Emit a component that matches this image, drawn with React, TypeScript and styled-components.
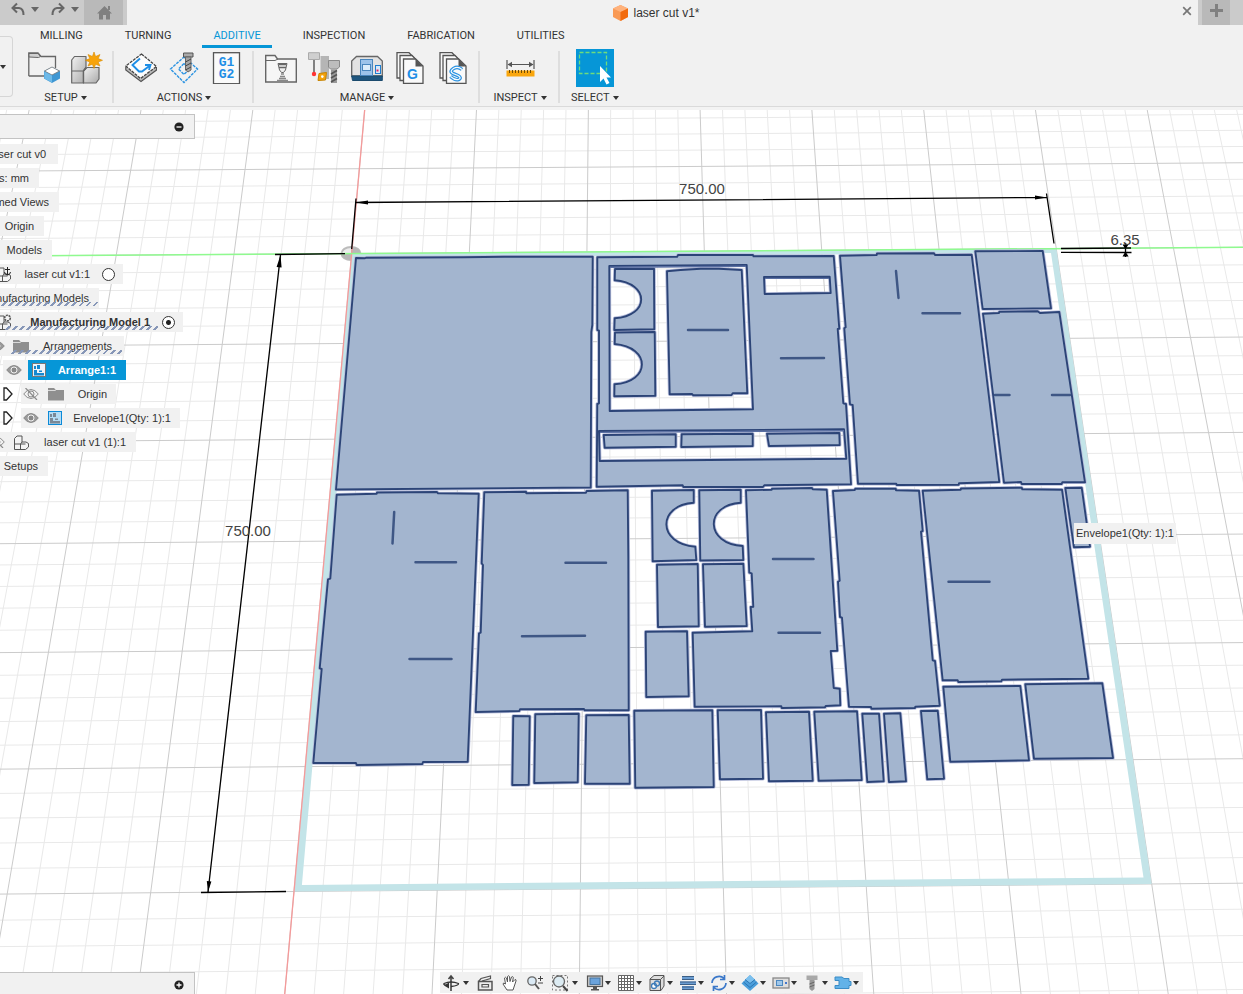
import React from "react";
import styled, { createGlobalStyle, css } from "styled-components";

const GlobalStyle = createGlobalStyle`
  * { box-sizing: border-box; }
  body { margin: 0; background: #fff; font-family: "Liberation Sans", Arial, sans-serif; font-size: 11px; color: #333; }
  button { font: inherit; color: inherit; background: none; border: 0; padding: 0; cursor: pointer; }
  svg { display: block; flex: none; }
`;

/* ---------- page frame ---------- */

const Page = styled.div`
  min-height: 100vh;
  display: grid;
  grid-template-rows: auto 1fr;
`;

const Header = styled.header`
  background: #f1f1f1;
  border-bottom: 3px solid #f3f3f3;
`;

const TitleBar = styled.div`
  display: flex;
  height: 25px;
`;

const QuickBar = styled.div`
  display: flex;
  align-items: flex-start;
  gap: 12px;
  width: 84px;
  padding: 2px 0 0 11px;
  background: #cbcbcb;
`;

const QuickItem = styled.div`
  display: flex;
  align-items: center;
  gap: 6px;
`;

const HomeButton = styled.button`
  width: 43px;
  padding: 6px 0 0 13px;
  display: flex;
  align-items: flex-start;
  background: #b9b9b9;
  border-right: 4px solid #cbcbcb;
`;

const DocumentTitle = styled.div`
  flex: 1;
  display: flex;
  align-items: center;
  justify-content: center;
  gap: 5px;
  padding-right: 12px;
  font-size: 12px;
`;

const CloseButton = styled.button`
  width: 23px;
  padding-left: 7px;
  margin-left: -23px;
  display: flex;
  align-items: center;
  padding-bottom: 3px;
`;

const NewTabButton = styled.button`
  width: 45px;
  display: flex;
  align-items: center;
  justify-content: center;
  background: #b9b9b9;
  border-left: 4px solid #cbcbcb;
  border-right: 13px solid #cbcbcb;
  padding-bottom: 4px;
`;

const RibbonShell = styled.div`
  display: flex;
  height: 82px;
  border-bottom: 1px solid #dadada;
`;

const WorkspaceButton = styled.button`
  width: 13px;
  height: 61px;
  margin-top: 11px;
  border: 1px solid #d6d6d6;
  border-left: 0;
  border-radius: 0 4px 4px 0;
  display: flex;
  align-items: center;
`;

const RibbonMain = styled.div`
  flex: 1;
  padding-left: 4px;
`;

const Tabs = styled.div`
  display: flex;
  gap: 20px;
  padding-left: 12px;
  height: 23px;
  font-family: Roboto, sans-serif;
`;

const Tab = styled.button<{ $active?: boolean }>`
  padding: 2px 11px 0;
  height: 23px;
  line-height: 18px;
  border-bottom: 3px solid transparent;
  ${(p) => p.$active && css`color: #0696d7; border-bottom-color: #0696d7;`}
`;

const Groups = styled.div`
  display: flex;
  padding-top: 3px;
`;

const Group = styled.section<{ $last?: boolean }>`
  min-width: ${(p) => (p.$last ? 0 : 80)}px;
  padding: 0 9px 0 11px;
  height: 52px;
  border-right: ${(p) => (p.$last ? 0 : 2)}px solid #dedede;
  display: flex;
  flex-direction: column;
  align-items: center;
  font-family: Roboto, sans-serif;
`;

const Tools = styled.div`
  display: flex;
  align-items: center;
  gap: 11px;
  height: 34px;
`;

const Tool = styled.button<{ $selected?: boolean }>`
  width: ${(p) => (p.$selected ? 38 : 32)}px;
  height: ${(p) => (p.$selected ? 38 : 34)}px;
  display: flex;
  align-items: center;
  justify-content: center;
  ${(p) => p.$selected && css`background: #0696d7;`}
`;

const GroupButton = styled.button`
  display: flex;
  align-items: center;
  gap: 3px;
  line-height: 14px;
  margin-top: 6px;
  white-space: nowrap;
`;

const Caret = styled.span<{ $large?: boolean }>`
  border: ${(p) => (p.$large ? 4 : 3)}px solid transparent;
  border-top: ${(p) => (p.$large ? 5 : 4)}px solid ${(p) => (p.$large ? "#666" : "#333")};
  border-bottom: 0;
`;

/* ---------- canvas and overlays ---------- */

const Canvas = styled.main`
  position: relative;
  overflow: hidden;
  min-height: 884px;
  background: #fff;
`;

const Scene = styled.svg`
  position: absolute;
  inset: 0;
  width: 100%;
  height: 100%;
`;

const Browser = styled.aside`
  position: absolute;
  top: 4px;
  left: 0;
  width: 195px;
`;

const PanelHead = styled.div`
  height: 25px;
  display: flex;
  align-items: center;
  justify-content: flex-end;
  padding-right: 10px;
  background: #f1f1f1;
  border: 1px solid #c3c3c3;
  border-left: 0;
`;

const Comments = styled(PanelHead)`
  position: absolute;
  left: 0;
  bottom: 0;
  width: 195px;
  height: 22px;
  padding-top: 2px;
  border-bottom: 0;
`;

const Tree = styled.ul`
  list-style: none;
  margin: 5px 0 0;
  padding: 0;
  display: flex;
  flex-direction: column;
  gap: 4px;
`;

const Row = styled.li`
  display: flex;
  height: 20px;
`;

const RowBody = styled.div<{ $w: number; $end?: number }>`
  position: relative;
  width: ${(p) => p.$w}px;
  padding-right: ${(p) => p.$end || 10}px;
  display: flex;
  align-items: center;
  justify-content: flex-end;
  overflow: hidden;
  background: #f1f1f1;
  white-space: nowrap;
`;

const SelectedBody = styled(RowBody)`
  background: #0696d7;
  color: #fff;
  font-weight: bold;
`;

const EyeCell = styled.div`
  width: 25px;
  margin-left: 3px;
  padding-right: 3px;
  display: flex;
  align-items: center;
  justify-content: center;
  background: #f1f1f1;
`;

const Expander = styled.button`
  width: 18px;
  padding-left: 3px;
  margin-right: 3px;
`;

const RowLabel = styled.label<{ $gap?: number; $bold?: boolean }>`
  margin-left: ${(p) => p.$gap || 0}px;
  font-weight: ${(p) => (p.$bold ? "bold" : "inherit")};
`;

const Hatch = styled.i<{ $from?: number; $to: number }>`
  position: absolute;
  left: ${(p) => p.$from || 0}px;
  width: ${(p) => p.$to - (p.$from || 0)}px;
  bottom: 2px;
  height: 4px;
  background: repeating-linear-gradient(135deg, transparent 0 3px, #8797b8 3px 5px);
`;

const Radio = styled.input`
  appearance: none;
  flex: none;
  width: 13px;
  height: 13px;
  margin: 0 0 0 12px;
  border: 1px solid #333;
  border-radius: 50%;
  background: #fff;
  &:checked { background: radial-gradient(circle, #222 0 2px, #fff 3px); }
`;

const Tooltip = styled.div`
  position: absolute;
  left: 1074px;
  top: 413px;
  height: 21px;
  line-height: 21px;
  padding: 0 2px;
  background: #f1f1f1;
  white-space: nowrap;
`;

const NavBar = styled.nav`
  position: absolute;
  left: 440px;
  bottom: 1px;
  height: 21px;
  padding: 0 4px 0 2px;
  display: flex;
  gap: 8px;
  background: #f1f1f1;
`;

const NavGroup = styled.div<{ $gap: number }>`
  display: flex;
  gap: ${(p) => p.$gap}px;
`;

const NavButton = styled.button<{ $gap: number }>`
  display: flex;
  align-items: center;
  gap: ${(p) => p.$gap}px;
`;

/* ---------- scene data ---------- */

type Pt = [number, number];

/* Corners of the 750 mm square on screen: top-left, top-right, bottom-right, bottom-left. */
const CORNERS: Pt[] = [[351.7, 253.5], [1056.3, 248.6], [1151.7, 884], [294, 891.5]];

const makeProjection = ([p0, p1, p2, p3]: Pt[]) => {
  const dx1 = p1[0] - p2[0], dx2 = p3[0] - p2[0], sx = p0[0] - p1[0] + p2[0] - p3[0];
  const dy1 = p1[1] - p2[1], dy2 = p3[1] - p2[1], sy = p0[1] - p1[1] + p2[1] - p3[1];
  const det = dx1 * dy2 - dx2 * dy1;
  const g = (sx * dy2 - dx2 * sy) / det;
  const h = (dx1 * sy - sx * dy1) / det;
  const a = p1[0] - p0[0] + g * p1[0], b = p3[0] - p0[0] + h * p3[0];
  const d = p1[1] - p0[1] + g * p1[1], e = p3[1] - p0[1] + h * p3[1];
  return (u: number, v: number): Pt => {
    const w = g * u + h * v + 1;
    return [(a * u + b * v + p0[0]) / w, (d * u + e * v + p0[1]) / w];
  };
};

const project = makeProjection(CORNERS);
const at = (u: number, v: number) => project(u / 30, v / 30).map((n) => n.toFixed(1)).join(" ");

const range = (from: number, to: number) => Array.from({ length: to - from + 1 }, (_, i) => from + i);

const gridPath = (major: boolean) =>
  [
    ...range(-40, 60).filter((n) => (n % 5 === 0) === major).map((n) => `M${at(n, -10)}L${at(n, 42)}`),
    ...range(-10, 40).filter((n) => (n % 5 === 0) === major).map((n) => `M${at(-40, n)}L${at(60, n)}`),
  ].join("");

const rim = 0.254;
const ring = `M${at(0, 0)}L${at(30, 0)}L${at(30, 30)}L${at(0, 30)}ZM${at(rim, rim)}L${at(30 - rim, rim)}L${at(30 - rim, 30 - rim)}L${at(rim, 30 - rim)}Z`;

const PARTS: string[] = [
  "M356 258L365 258.3L366 257.7L464 257.3L504 256.7L592.7 256.7L592.3 325L591.3 332L590.7 487.5L336 489.5Z",
  "M597.3 257.3L677.3 256.7L678 255L753 255L753.5 256.3L833.7 256L839.3 328.7L837.7 329L843.3 403.3L846 404L851 484.3L764.3 485.3L763 487L683.3 487L682.7 485.3L596.7 486.7L597.3 404L599 403.3L599 330.7L597.3 330Z" +
    "M609.3 266L746.7 265L753 409.3L609.7 411ZM764 277L829.7 276.7L830.7 293L764.7 294ZM599 431L844 429.3L846.3 458.7L599.7 461Z",
  "M615 269L654 268.7L654.3 329.3L614.3 330L614.7 318.3C650 316 650 283 614.7 280.3Z",
  "M615 332.5L654.7 332L655.3 395.7L614.3 396.3L614.5 384.3C651 382 651 347 614.7 344Z",
  "M667 271.3L680.5 270L700.7 268.7L719 268.7L741.7 270L747.3 393.3L732.7 393.3L731.5 395L693.3 395.3L692 394L669.7 394.3Z",
  "M603.7 435L675.7 434.3L675.7 446.7L604.7 447.7Z",
  "M681.7 434.3L752.7 433.7L752.7 446L681.3 447Z",
  "M767 433.7L839.3 433L839.7 445L769 446Z",
  "M840 255.7L876.7 255L877 253.5L934 253.3L935 255L971.7 254.7L999.3 482L959 483.3L958.7 484.7L896.7 485L896.3 483.7L858 483.7L852.7 405L850 404.3L844.3 328.3L845.7 327.3Z",
  "M975.3 251.3L1042.7 251L1051 308.3L982.7 309Z",
  "M983 313.7L999 313L999.3 311.7L1037.7 311.3L1040 313L1059.3 312L1085 482.3L1062.3 482.3L1061.7 484L1021.7 484L1021 482L1004 482.7Z",
  "M336.7 494.7L376.7 493.7L377 492.5L437 492L438 493.3L478.7 493.7L467.7 761.7L423 762L422.3 764L356.7 765L356 763L313.3 763L321.7 669L319.7 668.3L328 579.3L330.3 578.7Z",
  "M484.3 492.3L526 491.7L526.3 493.3L586 492.7L586.7 491L627.7 490.3L628.3 556.7L628.7 710.3L584.7 710.3L584 709L520 709.3L519.3 711L475.7 712L479 633.3L480.7 632.7L483 565L481.7 563.3Z",
  "M513.3 716L529.7 716.3L528.7 784.7L512.3 785Z",
  "M535.3 714.3L578.7 713.7L577.7 782.3L534.3 783Z",
  "M586.3 715.3L628.7 715L629.7 783.7L585 783.7Z",
  "M634.3 710.7L712.3 710.3L713.7 787L635.3 787.7Z",
  "M717.7 710.3L761 710L763 778.7L720 779.3Z",
  "M766 712.3L809 711.7L812.7 780.7L769 781.3Z",
  "M814.3 711.7L857 711.3L861.7 780L818.7 780.7Z",
  "M652 490.7L693.7 490L693.7 502.7C657 505 657 544 695.3 546.7L696.3 560L652.7 561.3Z",
  "M699.3 490.3L740.7 489.7L740.7 502.7C704 505 705 544 742.7 546L743.3 560L700.3 560.5Z",
  "M657 564.7L697.7 564L698.7 626.3L658 627Z",
  "M703 564.3L743.3 563.7L746.7 626L705 626.7Z",
  "M645.7 631.7L687 631.3L688.7 696.3L646.3 697Z",
  "M746 490.3L771.7 489.7L772 488.7L812 488L812.7 489.3L826.7 489.7L837.3 650.7L830.7 651L833.7 688L839.7 688.7L840.3 705.3L825.7 706L825 707.3L781.7 708L781.3 706.3L694.7 706.7L692.7 632.7L752.3 631.3L750.7 607L753.3 606.7L751.7 573.3L749.3 572.7Z",
  "M833 491L854.7 490L855.3 488.7L895.7 488.7L896 490.3L919 490.7L922.7 531L921 531.7L932.7 660.3L935 661L939.7 705.7L915.3 706.7L915 708L871.3 708.7L871 707L849 706.7L842 617.7L840 617L838 581.7L839.7 580.7Z",
  "M922.7 490.7L960.7 489.7L961 488.5L1021.7 487.7L1022.3 489.3L1062 489.7L1088.3 678.7L1002 679.7L1001.3 681.3L958.3 682L957.7 680.3L942.7 680.3Z",
  "M1065.3 488L1081.7 487.7L1090 546.7L1074 547.3Z",
  "M943.3 686.7L1020.3 686L1029 760.3L950.3 761.7Z",
  "M1025.3 684.3L1102.3 683.3L1113 758L1034 758.7Z",
  "M862.3 713.7L879 713.7L883.7 781.3L867.3 782Z",
  "M884 713.7L900.3 713.3L906 781.3L889 782Z",
  "M921 711L937.7 710.7L944 778.7L927.3 779.3Z",
];

const SLOTS =
  "M688 330H728M781 358.3L824 358M922.5 313.3H960M995 395H1009.500M1052 395H1070M415.500 562.2H456M409.500 659H451.500M565.500 562.7H606M522 636.3L585 635.7M773 559H813.500M778.500 632.700H820M948.500 581.800H989.500M896 271L898.500 298M394.200 512L392.500 543.500";

const Viewport = () => (
  <Scene viewBox="0 110 1243 884" preserveAspectRatio="xMinYMin slice" role="img" aria-label="Arranged sheet parts">
    <path d={gridPath(false)} stroke="#e9e9e9" fill="none" />
    <path d={gridPath(true)} stroke="#cbcbcb" fill="none" />
    <ellipse cx="351" cy="253.5" rx="9.5" ry="6.5" fill="#ececec" stroke="#bcbcbc" strokeWidth="2" />
    <path d="M351 253.5V247A9.5 6.5 0 0 1 360.5 253.5ZM351 253.5V260A9.5 6.5 0 0 1 341.5 253.5Z" fill="#b8b8b8" />
    <path d={ring} fill="#c3e4e8" fillRule="evenodd" />
    <path d={`M${at(0, -10)}L${at(0, 42)}`} stroke="#f59a9a" strokeWidth="1.3" />
    <path d={`M${at(-40, 0)}L${at(60, 0)}`} stroke="#8ffa8f" strokeWidth="1.5" />
    <g strokeLinejoin="round" fillRule="evenodd">
      {PARTS.map((d) => <path key={d} d={d} fill="none" stroke="#b9bfdc" strokeWidth="3.6" />)}
      {PARTS.map((d) => <path key={d} d={d} fill="#a3b5cf" stroke="#2c4477" strokeWidth="1.9" />)}
    </g>
    <path d={SLOTS} stroke="#3f5785" strokeWidth="2.5" strokeLinecap="round" />
    <path d="M600 432.4L844 430.8M610 267.2L746 266.2M765 278.4H829" stroke="#5b70a3" strokeWidth="1.4" />
    <g stroke="#000" strokeWidth="1.3" fill="none">
      <path d="M356 202.5L1047 197.5M356 198.5L351.7 249M1046.5 193.5L1054 243.5" />
      <path d="M280.5 254.5L208 892M275 254.5L345 253.7M201 892.5L286 891.5" />
      <path d="M1061 248.5L1131 248M1061 252.3L1131.5 252.5M1125.5 243V257" />
    </g>
    <path d="M356 202.5L368 200.4V204.4ZM1047 197.5L1035 195.6V199.6ZM280.500 255L276.600 267L281.600 267.500ZM208 892L206.800 881L211.400 881.500ZM1125.500 249L1122.500 244.500H1128.500ZM1125.500 251.500L1122.500 256.500H1128.500Z" fill="#000" />
    <g fontFamily="Liberation Sans, Arial, sans-serif" fontSize="15" fill="#444" textAnchor="middle">
      <text x="702" y="194">750.00</text>
      <text x="248" y="536">750.00</text>
      <text x="1125" y="245">6.35</text>
    </g>
  </Scene>
);

/* ---------- icons ---------- */

const UndoIcon = ({ flip }: { flip?: boolean }) => (
  <svg width="14" height="14" viewBox="0 0 14 14" fill="none" stroke="#666" strokeWidth="2">
    <path d="M6 1.5L1.5 6L6 10.5M2 6H8Q12.5 6.5 12.5 13" transform={flip ? "translate(14 0) scale(-1 1)" : undefined} />
  </svg>
);

const HomeIcon = () => (
  <svg width="15" height="14" viewBox="0 0 15 14" fill="#808080">
    <path d="M7.5 0L15 7.5H13V13.5H9V9H6V13.5H2V7.5H0ZM11 0H13V4H11Z" />
  </svg>
);

const CubeIcon = () => (
  <svg width="15" height="16" viewBox="0 0 15 16">
    <path d="M7.5 0L15 3.5V12L7.5 16L0 12V3.5Z" fill="#f99a55" />
    <path d="M7.5 0L15 3.5L7.5 7L0 3.5Z" fill="#ffb27c" />
    <path d="M7.5 7L15 3.5V12L7.5 16Z" fill="#f26a0c" />
  </svg>
);

const SetupFolderIcon = () => (
  <svg width="32" height="32" viewBox="0 0 32 32">
    <path d="M.8 24V1H10L13 4.5H27.5V16M.8 24H16" fill="none" stroke="#666" strokeWidth="1.3" />
    <path d="M1 5V1.5H10L12.5 4.5L10.5 5.5Z" fill="#d0d0d0" stroke="#666" />
    <path d="M24 15L32 19V26.5L24 31L16 26.5V19Z" fill="#3f97d3" />
    <path d="M24 15L31.5 19L24 23L16.5 19Z" fill="#fff" stroke="#777" strokeWidth=".8" />
    <path d="M16.3 19.5L24 23.5V30.5L16.3 26.5Z" fill="#6db9e8" />
  </svg>
);

const NewModelIcon = () => (
  <svg width="32" height="32" viewBox="0 0 32 32">
    <defs>
      <linearGradient id="metal" x1="0" y1="0" x2="1" y2="1">
        <stop offset="0" stopColor="#f2f2f2" /><stop offset="1" stopColor="#a9a9a9" />
      </linearGradient>
    </defs>
    <g fill="url(#metal)" stroke="#666" strokeWidth="1.2" strokeLinejoin="round">
      <path d="M.7 8L3.5 4.5H15V15L12.5 18.5V31H.7Z" />
      <path d="M12.5 19L16 15.5H28V27L25 31H12.5Z" />
      <path d="M.7 19H12.5M12.5 19V31M12.5 19L15 16" fill="none" />
    </g>
    <path d="M23 0L24.6 4.5L29 2.5L27.2 6.6L31.5 8.3L27.2 10L29 14L24.6 12.2L23 16.5L21.4 12.2L17 14L18.8 10L14.5 8.3L18.8 6.6L17 2.5L21.4 4.5Z" fill="#f7a30a" stroke="#d98b00" strokeWidth=".6" />
  </svg>
);

const PocketIcon = () => (
  <svg width="32" height="32" viewBox="0 0 32 32">
    <path d="M.8 15V18L16 29.5L31.5 18V15" fill="#bbb" stroke="#555" strokeWidth="1.2" />
    <path d="M16.5 2L31.5 14.500L15.5 26.5L.8 14Z" fill="#fdfdfd" stroke="#444" strokeWidth="1.3" strokeDasharray="3 1" />
    <path d="M15 6.500L7.500 13L14 19.500H17L25 13.500M20 13H25.500L24 18" fill="none" stroke="#1e8ee6" strokeWidth="1.900" />
  </svg>
);

const ToolpathIcon = () => (
  <svg width="32" height="32" viewBox="0 0 32 32">
    <path d="M16 5L29.5 17L16 30.5L2.5 17ZM16 11.5L21.5 17L16 22.5L10.5 17Z" fill="none" stroke="#2b93e2" strokeWidth="1.4" strokeDasharray="3 1" />
    <path d="M15.5 1H25V5H15.5Z" fill="#aaa" stroke="#555" />
    <path d="M17.5 5H23V18L20 20L17.5 18Z" fill="#a5a5a5" stroke="#666" />
    <path d="M17.5 10L23 7M17.5 14L23 11M17.5 18L23 15" stroke="#444" />
  </svg>
);

const GcodeIcon = () => (
  <svg width="32" height="32" viewBox="0 0 32 32">
    <rect x="2.5" y=".7" width="26" height="31" fill="#fafafa" stroke="#555" strokeWidth="1.3" />
    <g fontFamily="Liberation Mono, monospace" fontWeight="bold" fontSize="13" fill="#1e8ee6" textAnchor="middle">
      <text x="15.5" y="14">G1</text><text x="15.5" y="26">G2</text>
    </g>
  </svg>
);

const TemplateIcon = () => (
  <svg width="32" height="32" viewBox="0 0 32 32" stroke="#666">
    <path d="M.7 30V3.5H10L12.5 7H31.3V30Z" fill="#f6f6f6" strokeWidth="1.4" />
    <path d="M.7 8.5H10L13 7" fill="none" />
    <path d="M13 11.5H22L20.5 18L18.5 20.5H16.5L14.5 18Z" fill="#eee" />
    <path d="M13.5 12.5H21.5M14 15.5H21" strokeWidth="1.6" />
    <path d="M16 22H19M15 24.5H20M14 26.500H21M12 28.5H23" stroke="#888" strokeWidth="1.5" />
  </svg>
);

const ToolLibraryIcon = () => (
  <svg width="32" height="32" viewBox="0 0 32 32">
    <path d="M12.5 4H21V27H12.5Z" fill="#b5b5b5" />
    <path d="M.5 .7H11.5V7.5H.5Z" fill="#cfcfcf" stroke="#aaa" />
    <path d="M6 8V21" stroke="#666" strokeWidth="1.6" />
    <circle cx="6" cy="22" r="2.2" fill="#f33" />
    <path d="M11 21.5L18.5 20.5L17.5 28L10 28.5Z" fill="#f5a30c" stroke="#c78300" />
    <circle cx="14.3" cy="24.6" r="1.3" fill="#fff" />
    <path d="M20.5 8.5H31.5V15L29 17H22.500L20.5 15Z" fill="#bdbdbd" stroke="#8a8a8a" />
    <path d="M23 17.5H29V31H23Z" fill="#999" />
    <path d="M23 22L29 18.5M23 26L29 22.5M23 30L29 26.5" stroke="#555" strokeWidth="1.6" />
  </svg>
);

const MachineIcon = () => (
  <svg width="32" height="32" viewBox="0 0 32 32">
    <path d="M.7 24V9L5.5 4.5H26.5L31.3 9V24Z" fill="#e3e3e3" stroke="#666" strokeWidth="1.3" />
    <path d="M.7 24H31.3V28.5H1.500Z" fill="#1f567f" stroke="#1b4a6d" />
    <rect x="9.5" y="7.5" width="12" height="16" fill="#9dc3ea" stroke="#4a86bd" />
    <rect x="11.5" y="12.5" width="8" height="6" fill="#dcecfa" stroke="#4a86bd" />
    <rect x="24.5" y="13.5" width="5" height="8" fill="#d8e9f9" stroke="#1e7ed0" />
    <path d="M25.5 17.500H27.5V19.5H25.5Z" fill="#e0245e" />
  </svg>
);

const PagesIcon = ({ children }: { children: React.ReactNode }) => (
  <svg width="32" height="32" viewBox="0 0 32 32">
    <g fill="#fafafa" stroke="#555" strokeWidth="1.3">
      <path d="M3 .7H15L22 8V26H3Z" /><path d="M6 3.5H18L25 10.5V28.5H6Z" />
      <path d="M9.5 7H21.5L29 14V31.3H9.5Z" />
    </g>
    <path d="M21.5 7L29 14.5H21.5Z" fill="#555" />
    {children}
  </svg>
);

const RulerIcon = () => (
  <svg width="32" height="32" viewBox="0 0 32 32">
    <path d="M3 8V17M30 8V17M4 12.5H29" stroke="#555" strokeWidth="1.2" />
    <path d="M3.5 12.5L8 9.8V15.2ZM29.500 12.5L25 9.8V15.2Z" fill="#555" />
    <rect x="2.5" y="18.5" width="28" height="6" fill="#f9a60d" />
    <path d="M5.5 18V21M8.5 18V21M11.5 18V21M14.5 18V21M17.5 18V21M20.5 18V21M23.5 18V21M26.5 18V21" stroke="#6d4a05" />
  </svg>
);

const SelectIcon = () => (
  <svg width="38" height="38" viewBox="0 0 38 38">
    <rect x="3.5" y="3.5" width="27" height="21" fill="none" stroke="#6fdc7c" strokeWidth="1.3" strokeDasharray="4 2" />
    <path d="M24 17V33L27.5 29.5L30.5 35.5L33.5 34L30.5 28.5H35Z" fill="#fff" />
  </svg>
);

const SignIcon = ({ plus }: { plus?: boolean }) => (
  <svg width="10" height="10" viewBox="0 0 10 10">
    <circle cx="5" cy="5" r="4.6" fill="#222" />
    <path d={plus ? "M2.5 5H7.5M5 2.5V7.5" : "M2.5 5H7.5"} stroke="#fff" strokeWidth="1.3" />
  </svg>
);

const EyeIcon = ({ off }: { off?: boolean }) => (
  <svg width="16" height="12" viewBox="0 0 16 12" fill="none" stroke="#8b8b8b">
    <path d="M.7 6Q4 1.5 8 1.5T15.3 6Q12 10.5 8 10.5T.7 6Z" fill={off ? "none" : "#9a9a9a"} />
    <circle cx="8" cy="6" r="3" fill={off ? "none" : "#888"} stroke={off ? "#8b8b8b" : "#f1f1f1"} />
    {off && <path d="M2.5 0L14 12" strokeWidth="1.2" />}
  </svg>
);

const FolderIcon = () => (
  <svg width="16" height="14" viewBox="0 0 16 14" fill="#8f8f8f">
    <path d="M0 1H6L8 3H16V13.5H0Z" />
    <path d="M0 3.5H7L8.5 2.5" stroke="#eee" strokeWidth=".8" fill="none" />
  </svg>
);

const ArrangeIcon = ({ tint }: { tint?: boolean }) => (
  <svg width="14" height="14" viewBox="0 0 14 14">
    <rect x=".5" y=".5" width="13" height="13" fill={tint ? "#b5dcf5" : "#eef4f9"} stroke={tint ? "#0b8ad8" : "#777"} />
    <path d="M2 3H4V6H2ZM5 2H8V6H5ZM2 7H5V10H12V12.5H2ZM7 7.5H10V9H7Z" fill={tint ? "#7a8896" : "#1488d0"} />
  </svg>
);

const BodiesIcon = ({ badge }: { badge?: "anchor" | "gear" }) => (
  <svg width="17" height="17" viewBox="0 0 17 17" fill="#f4f4f4" stroke="#555" strokeLinejoin="round">
    <path d="M1.5 4.5L4 2H9V8H13L15.5 9.5V13L12.5 15.5H1.5Z" />
    <path d="M1.5 10H7.5V15.5M7.5 10L9 8M7.5 10H12.5" fill="none" />
    {badge === "anchor" && <path d="M12.5 1V9M10 3.5H15M9.5 6Q10 9 12.5 9T15.5 6" fill="none" stroke="#222" />}
    {badge === "gear" && <circle cx="12.5" cy="4" r="2.8" strokeWidth="1.6" strokeDasharray="2 .8" />}
  </svg>
);

const NAV_A: [string, React.ReactNode, boolean][] = [
  ["Orbit", <><path d="M9 2V17M6.5 5L9 2L11.5 5" fill="none" stroke="#444" strokeWidth="1.6" /><path d="M6 11.5Q1 11 2 9.500Q9 6.500 16.500 9.500Q17 11.500 9 12.500" fill="none" stroke="#333" strokeWidth="1.3" /><path d="M7 8.500V14.500L2 11.500Z" fill="#333" /></>, true],
  ["Look at", <><path d="M2.5 7.500H16V16H2.5Z" fill="#eee" stroke="#555" strokeWidth="1.5" /><path d="M2.500 7.500L5 4.500L14.500 2V4.500L6 7M6 10.500H12.500V13H6Z" fill="none" stroke="#555" strokeWidth="1.2" /></>, false],
  ["Pan", <path d="M6 16L2 10Q2 8 4.5 10L3.5 4Q4.5 2.5 5.5 4L6.5 8L6.5 2.5Q7.5 1 8.5 2.5L9 7.5L10.5 3Q12 2 12.3 3.5L11.5 8L14 5.5Q15.5 5.5 15 7L12 16Z" fill="#fff" stroke="#555" />, false],
  ["Zoom", <><circle cx="6" cy="7" r="4.2" fill="#dbeaf5" stroke="#666" strokeWidth="1.3" /><path d="M9 10L13 15" stroke="#555" strokeWidth="2" /><path d="M12 4.5H17M14.5 2V7M12 9H17" stroke="#444" /></>, false],
  ["Fit", <><path d="M1.5 1.5H16.5V16H1.5Z" fill="none" stroke="#777" strokeDasharray="2 2" /><circle cx="8" cy="7.5" r="5.5" fill="#dcebf2" stroke="#666" strokeWidth="1.3" /><path d="M12 12L16.5 17" stroke="#444" strokeWidth="2" /></>, true],
];

const NAV_B: [string, React.ReactNode][] = [
  ["Display settings", <><rect x="1.5" y="2" width="15" height="10.5" fill="#ccc" stroke="#555" strokeWidth="1.2" /><rect x="4" y="4" width="10" height="6.5" fill="#6ba3dc" stroke="#47749f" /><path d="M7 13H11V15H13V16.5H5V15H7Z" fill="#555" /></>],
  ["Grid and snaps", <path d="M1.5 1.5H16.5V16.5H1.5ZM1.5 4.5H16.5M1.5 7.5H16.5M1.5 10.5H16.5M1.5 13.5H16.5M4.5 1.5V16.5M7.5 1.5V16.5M10.5 1.5V16.5M13.5 1.5V16.5" fill="#fff" stroke="#666" />],
  ["Viewports", <><path d="M2 5L6 1.5H16V12L13 16.5H2Z" fill="#ddd" stroke="#555" /><path d="M2 5.5H12.5V16.5M12.5 5.5L16 2" fill="none" stroke="#555" /><circle cx="6" cy="12" r="2.5" fill="#fff" stroke="#3d7bb8" strokeWidth="1.3" /><circle cx="9" cy="9.5" r="2.5" fill="none" stroke="#3d7bb8" strokeWidth="1.3" /></>],
  ["Steps", <><path d="M3 3H15V6H3ZM1 7.5H17V10H1ZM3 12H15V15H3Z" fill="#6a9dd2" /><path d="M3 2.5H15M3 5.5H15M1 8H17M1 10.5H17M3 13H15M3 15.5H15" stroke="#3c5f86" /></>],
  ["Refresh", <path d="M2 9A7 7 0 0 1 14 4.5M14.5 1V5.5H10M16 9A7 7 0 0 1 4 13.5M3.5 17V12.5H8" fill="none" stroke="#3b78c9" strokeWidth="1.7" />],
  ["Stack", <><path d="M9 1L17.5 9.5L9 17L.5 9.5Z" fill="#4a9edb" /><path d="M9 1L14 5.5L9 9.5L4 5.5Z" fill="#7cc0ee" /><path d="M4 5.5L9 9.5L14 5.5M2.5 8L9 13.5L15.5 8" fill="none" stroke="#2b76b4" /></>],
  ["Machine", <><rect x="1" y="4" width="16" height="10" fill="#ddd" stroke="#888" strokeWidth="1.3" /><rect x="4.5" y="6.5" width="6" height="5" fill="#9fc7ea" stroke="#4c88c0" /><path d="M13 8H15V10H13Z" fill="#47c" /></>],
  ["Tool", <><path d="M3.5 1.5H14.5V6H3.5Z" fill="#a8a8a8" /><path d="M6.5 6H11.5V15L9 17L6.500 15Z" fill="#999" /><path d="M6.5 10L11.5 8M6.5 13L11.5 11" stroke="#666" /></>],
  ["Fixture", <path d="M1 3H8L10 4.500H15V7.500H17V11.500H15V14.500H1V11.500H5V6.500H1Z" fill="#62b2e8" stroke="#3b8cc6" />],
];

const NavIcon = ({ children }: { children: React.ReactNode }) => (
  <svg width="18" height="18" viewBox="0 0 18 18">{children}</svg>
);

/* ---------- ribbon data ---------- */

const TABS = ["MILLING", "TURNING", "ADDITIVE", "INSPECTION", "FABRICATION", "UTILITIES"];

const ribbonCurve = "M25 17.5Q21 14 16.500 16.500Q12 19.500 16 21.500L21 23.500Q25 26 21.500 27.500Q18 28.500 13.500 24.500";

const GROUPS: { name: string; tools: [string, React.ReactNode][] }[] = [
  { name: "SETUP", tools: [["New setup", <SetupFolderIcon />], ["New manufacturing model", <NewModelIcon />]] },
  { name: "ACTIONS", tools: [["Simulate", <PocketIcon />], ["Generate", <ToolpathIcon />], ["Post process", <GcodeIcon />]] },
  {
    name: "MANAGE",
    tools: [
      ["Template library", <TemplateIcon />],
      ["Tool library", <ToolLibraryIcon />],
      ["Machine library", <MachineIcon />],
      ["Post library", <PagesIcon><text x="18.5" y="27" fontFamily="Liberation Sans, sans-serif" fontWeight="bold" fontSize="14" fill="#1e8ee6" textAnchor="middle">G</text></PagesIcon>],
      ["Print settings", <PagesIcon><path d={ribbonCurve} fill="none" stroke="#2b93e2" strokeWidth="3.6" /><path d={ribbonCurve} fill="none" stroke="#fafafa" strokeWidth="1.2" /></PagesIcon>],
    ],
  },
  { name: "INSPECT", tools: [["Measure", <RulerIcon />]] },
  { name: "SELECT", tools: [["Select", <SelectIcon />]] },
];

export default function App() {
  return (
    <Page>
      <GlobalStyle />
      <Header>
        <TitleBar>
          <QuickBar>
            <QuickItem><button aria-label="Undo"><UndoIcon /></button><Caret $large /></QuickItem>
            <QuickItem><button aria-label="Redo"><UndoIcon flip /></button><Caret $large /></QuickItem>
          </QuickBar>
          <HomeButton aria-label="Home"><HomeIcon /></HomeButton>
          <DocumentTitle><CubeIcon />laser cut v1*</DocumentTitle>
          <CloseButton aria-label="Close document">
            <svg width="10" height="10" viewBox="0 0 10 10"><path d="M1.2 1.2L8.8 8.8M8.8 1.2L1.2 8.8" stroke="#777" strokeWidth="1.7" /></svg>
          </CloseButton>
          <NewTabButton aria-label="New document">
            <svg width="13" height="13" viewBox="0 0 13 13"><path d="M0 6.5H13M6.5 0V13" stroke="#808080" strokeWidth="3" /></svg>
          </NewTabButton>
        </TitleBar>
        <RibbonShell>
          <WorkspaceButton aria-label="Change workspace"><Caret /></WorkspaceButton>
          <RibbonMain>
            <Tabs>
              {TABS.map((t) => <Tab key={t} $active={t === "ADDITIVE"}>{t}</Tab>)}
            </Tabs>
            <Groups>
              {GROUPS.map((g) => (
                <Group key={g.name} $last={g.name === "SELECT"}>
                  <Tools>
                    {g.tools.map(([label, icon]) => (
                      <Tool key={label} aria-label={label} $selected={g.name === "SELECT"}>{icon}</Tool>
                    ))}
                  </Tools>
                  <GroupButton>{g.name}<Caret /></GroupButton>
                </Group>
              ))}
            </Groups>
          </RibbonMain>
        </RibbonShell>
      </Header>

      <Canvas>
        <Viewport />
        <Browser>
          <PanelHead><button aria-label="Collapse"><SignIcon /></button></PanelHead>
          <Tree>
            <Row><RowBody $w={58} $end={12}><span>laser cut v0</span></RowBody></Row>
            <Row><RowBody $w={39}><span>Units: mm</span></RowBody></Row>
            <Row><RowBody $w={59}><span>Named Views</span></RowBody></Row>
            <Row><RowBody $w={44}><span>Origin</span></RowBody></Row>
            <Row><RowBody $w={52}><span>Models</span></RowBody></Row>
            <Row>
              <RowBody $w={123} $end={8}>
                <BodiesIcon badge="anchor" />
                <RowLabel $gap={13} htmlFor="model-a">laser cut v1:1</RowLabel>
                <Radio type="radio" name="model" id="model-a" />
              </RowBody>
            </Row>
            <Row><RowBody $w={99}><span>Manufacturing Models</span><Hatch $to={98} /></RowBody></Row>
            <Row>
              <RowBody $w={183} $end={8}>
                <BodiesIcon badge="gear" />
                <RowLabel $gap={18} $bold htmlFor="model-b">Manufacturing Model 1</RowLabel>
                <Radio type="radio" name="model" id="model-b" defaultChecked />
                <Hatch $from={4} $to={158} />
              </RowBody>
            </Row>
            <Row>
              <RowBody $w={124} $end={12}>
                <EyeIcon />
                <RowLabel as="span" $gap={8}><FolderIcon /></RowLabel>
                <RowLabel as="span" $gap={14}>Arrangements</RowLabel>
                <Hatch $from={10} $to={122} />
              </RowBody>
            </Row>
            <Row>
              <EyeCell><EyeIcon /></EyeCell>
              <SelectedBody $w={98}><ArrangeIcon /><RowLabel as="span" $gap={12}>Arrange1:1</RowLabel></SelectedBody>
            </Row>
            {["Origin", "Envelope1(Qty: 1):1"].map((name, i) => (
              <Row key={name}>
                <Expander aria-label={`Expand ${name}`}>
                  <svg width="10" height="14" viewBox="0 0 10 14"><path d="M1 1H3.5L9 7L3.5 13H1Z" fill="#fff" stroke="#222" strokeWidth="1.3" /></svg>
                </Expander>
                <RowBody $w={i ? 159 : 95} $end={9}>
                  <EyeIcon off={!i} />
                  <RowLabel as="span" $gap={9}>{i ? <ArrangeIcon tint /> : <FolderIcon />}</RowLabel>
                  <RowLabel as="span" $gap={i ? 11 : 14}>{name}</RowLabel>
                </RowBody>
              </Row>
            ))}
            <Row>
              <RowBody $w={136}>
                <EyeIcon off />
                <RowLabel as="span" $gap={8}><BodiesIcon /></RowLabel>
                <RowLabel as="span" $gap={14}>laser cut v1 (1):1</RowLabel>
              </RowBody>
            </Row>
            <Row><RowBody $w={48}><span>Setups</span></RowBody></Row>
          </Tree>
        </Browser>
        <Tooltip role="tooltip">Envelope1(Qty: 1):1</Tooltip>
        <Comments><button aria-label="Show comments"><SignIcon plus /></button></Comments>
        <NavBar aria-label="Navigation">
          <NavGroup $gap={7}>
            {NAV_A.map(([label, icon, menu]) => (
              <NavButton key={label} aria-label={label} $gap={3}><NavIcon>{icon}</NavIcon>{menu && <Caret />}</NavButton>
            ))}
          </NavGroup>
          <NavGroup $gap={6}>
            {NAV_B.map(([label, icon]) => (
              <NavButton key={label} aria-label={label} $gap={1}><NavIcon>{icon}</NavIcon><Caret /></NavButton>
            ))}
          </NavGroup>
        </NavBar>
      </Canvas>
    </Page>
  );
}
